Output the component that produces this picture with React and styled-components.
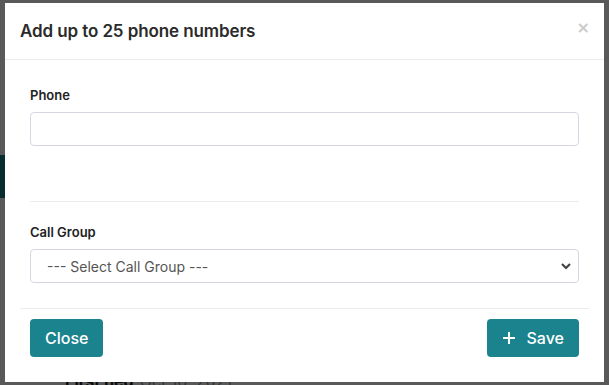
import React from "react";
import styled, { createGlobalStyle } from "styled-components";

const Global = createGlobalStyle`
  html, body { margin: 0; padding: 0; }
  body {
    width: 609px;
    height: 385px;
    overflow: hidden;
    background: #fff;
    font-family: Inter, "Noto Sans", "Liberation Sans", sans-serif;
  }
`;

const Page = styled.div`
  position: relative;
  height: 385px;
  padding-top: 155px;
  box-sizing: border-box;
`;

const PageButton = styled.div`
  width: 120px;
  height: 43px;
  margin-left: -100px;
  background: #1a7f88;
  color: #fff;
  font-size: 16px;
  line-height: 43px;
  text-align: right;
  padding-right: 6px;
`;

const PageRow = styled.div`
  margin: 173px 0 0 65px;
  font-size: 16px;
  color: #222;
  white-space: nowrap;
  b { font-weight: 700; margin-right: 6px; }
  span { color: #999; }
`;

const Backdrop = styled.div`
  position: fixed;
  inset: 0;
  background: rgba(0, 0, 0, 0.65);
  display: flex;
  align-items: flex-start;
`;

const Dialog = styled.div`
  width: 599px;
  margin: 3px 0 0 5px;
  background: #fff;
  display: flex;
  flex-direction: column;
`;

const Header = styled.div`
  height: 56px;
  padding: 0 14px 0 15px;
  display: flex;
  align-items: center;
  justify-content: space-between;
  border-bottom: 1px solid #ececec;
`;

const Title = styled.h4`
  margin: 0;
  font-size: 17px;
  font-weight: 600;
  color: #2b2b2b;
  letter-spacing: -0.1px;
`;

const CloseX = styled.button`
  border: 0;
  background: none;
  padding: 0;
  color: #cacaca;
  font-size: 16px;
  font-weight: 700;
  line-height: 1;
  cursor: pointer;
  font-family: "DejaVu Sans", sans-serif;
  margin-top: -6px;
`;

const Body = styled.div`
  padding: 26px 25px 25px;
  display: flex;
  flex-direction: column;
`;

const Label = styled.label`
  font-size: 13px;
  line-height: 18px;
  font-weight: 600;
  color: #222;
  margin-bottom: 8px;
`;

const fieldBase = `
  box-sizing: border-box;
  width: 100%;
  height: 34px;
  border: 1px solid #d6d6e2;
  border-radius: 4px;
  background: #fff;
  font-family: inherit;
  font-size: 14px;
  outline: none;
`;

const Input = styled.input`
  ${fieldBase}
  padding: 0 12px;
`;

const Select = styled.select`
  ${fieldBase}
  appearance: none;
  padding: 0 16px;
  color: #555;
  background-image: url("data:image/svg+xml,%3Csvg xmlns='http://www.w3.org/2000/svg' width='12' height='8' viewBox='0 0 12 8'%3E%3Cpath d='M2 2l4 4 4-4' fill='none' stroke='%23444' stroke-width='2.2'/%3E%3C/svg%3E");
  background-repeat: no-repeat;
  background-position: right 6px center;
`;

const Divider = styled.hr`
  border: 0;
  border-top: 1px solid #ececec;
  margin: 55px 0 21px;
`;

const Footer = styled.div`
  margin: 0 15px;
  padding: 10px 10px 25px;
  border-top: 1px solid #ececec;
  display: flex;
  justify-content: space-between;
`;

const Button = styled.button`
  height: 38px;
  padding: 0 ${(p) => p.$pad}px;
  border: 0;
  border-radius: 4px;
  background: #1b838e;
  color: #fff;
  font-family: inherit;
  font-size: 16px;
  font-weight: 500;
  display: flex;
  align-items: center;
  gap: 11px;
  cursor: pointer;
`;

export default function App() {
  return (
    <>
      <Global />
      <Page>
        <PageButton>n</PageButton>
        <PageRow>
          <b>First tied</b>
          <span>Oct 16, 2021</span>
        </PageRow>
      </Page>
      <Backdrop>
        <Dialog>
          <Header>
            <Title>Add up to 25 phone numbers</Title>
            <CloseX aria-label="Close">×</CloseX>
          </Header>
          <Body>
            <Label>Phone</Label>
            <Input type="text" />
            <Divider />
            <Label>Call Group</Label>
            <Select defaultValue="">
              <option value="">--- Select Call Group ---</option>
            </Select>
          </Body>
          <Footer>
            <Button $pad={15}>Close</Button>
            <Button $pad={15}>
              <svg width="14" height="14" viewBox="0 0 14 14">
                <path d="M7 1v12M1 7h12" stroke="#fff" strokeWidth="2" />
              </svg>
              Save
            </Button>
          </Footer>
        </Dialog>
      </Backdrop>
    </>
  );
}
